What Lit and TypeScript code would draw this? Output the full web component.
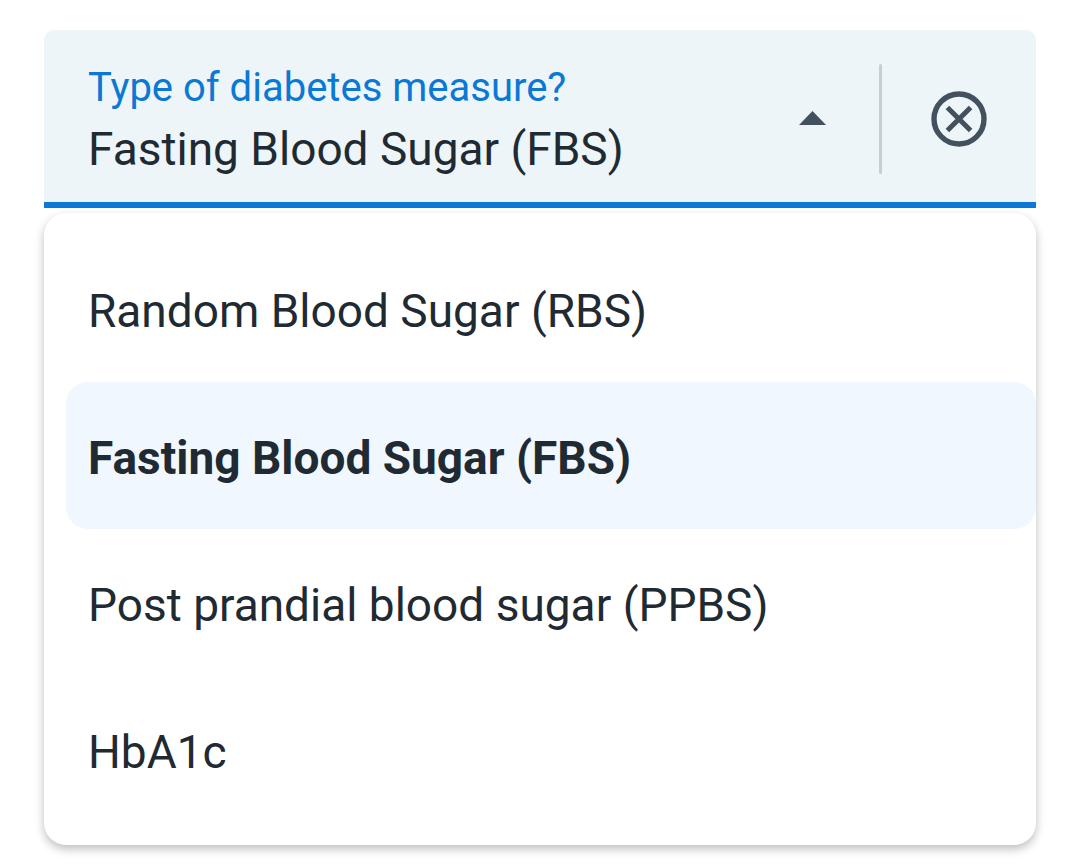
import { LitElement, html, css, nothing } from "lit";
import { customElement, state } from "lit/decorators.js";
import { classMap } from "lit/directives/class-map.js";

const MEASURES = [
  "Random Blood Sugar (RBS)",
  "Fasting Blood Sugar (FBS)",
  "Post prandial blood sugar (PPBS)",
  "HbA1c",
];

@customElement("app-root")
export class AppRoot extends LitElement {
  @state() private selected = "Fasting Blood Sugar (FBS)";
  @state() private open = true;

  static styles = css`
    :host {
      display: block;
      box-sizing: border-box;
      padding: 30px 44px 20px;
      background: #fff;
      color: #1f2a33;
      font-family: Roboto, "Noto Sans", sans-serif;
    }
    button,
    select {
      margin: 0;
      padding: 0;
      border: 0;
      background: none;
      color: inherit;
      font: inherit;
      cursor: pointer;
    }
    .field {
      display: flex;
      border-bottom: 6px solid #0b78d8;
      border-radius: 10px 10px 0 0;
      background: #edf5f9;
    }
    .text {
      display: flex;
      flex: 1;
      flex-direction: column;
      min-width: 0;
      padding: 29px 0 21px 44px;
    }
    .label {
      color: #0b78d3;
      font-size: 40px;
      line-height: 58px;
    }
    .value {
      appearance: none;
      width: 100%;
      height: 64px;
      font-size: 46px;
      line-height: 64px;
    }
    .value option {
      font-size: 16px;
    }
    .controls {
      display: flex;
      align-items: center;
      padding: 34px 49px 28px 0;
    }
    .controls svg {
      display: block;
    }
    .divider {
      align-self: stretch;
      width: 3px;
      margin: 0 49px 0 53px;
      border-radius: 2px;
      background: #c5ced4;
    }
    .clear {
      border-radius: 50%;
    }
    .menu {
      margin: 5px 0 0;
      padding: 22px 0 22px 22px;
      border-radius: 22px;
      background: #fff;
      box-shadow: 0 4px 10px rgba(0, 0, 0, 0.26);
    }
    .option {
      display: block;
      width: 100%;
      height: 147px;
      padding: 4px 22px 0;
      border-radius: 22px;
      font-size: 46px;
      line-height: 56px;
      text-align: left;
    }
    .option.selected {
      background: #f0f7fe;
      font-weight: 700;
    }
  `;

  private toggle(event: Event) {
    event.preventDefault();
    this.open = !this.open;
  }

  private choose(measure: string) {
    this.selected = measure;
    this.open = false;
  }

  render() {
    return html`
      <div class="field">
        <div class="text">
          <label class="label" for="measure">Type of diabetes measure?</label>
          <select
            id="measure"
            class="value"
            @mousedown=${this.toggle}
            @change=${(e: Event) => this.choose((e.target as HTMLSelectElement).value)}
          >
            <option value="" ?selected=${this.selected === ""}></option>
            ${MEASURES.map(
              (m) => html`<option value=${m} ?selected=${m === this.selected}>${m}</option>`
            )}
          </select>
        </div>
        <div class="controls">
          <button type="button" aria-label="Toggle options" aria-expanded=${this.open} @click=${this.toggle}>
            <svg width="27" height="16" viewBox="0 0 27 16" aria-hidden="true">
              <path d="M0 14 13.5 0 27 14z" fill="#43515e" />
            </svg>
          </button>
          <span class="divider"></span>
          <button class="clear" type="button" aria-label="Clear" @click=${() => (this.selected = "")}>
            <svg width="56" height="56" viewBox="0 0 56 56" fill="none" stroke="#43515e" aria-hidden="true">
              <circle cx="28" cy="28" r="25" stroke-width="5.4" />
              <path d="M16.4 16.4 39.6 39.6M39.6 16.4 16.4 39.6" stroke-width="5" />
            </svg>
          </button>
        </div>
      </div>
      ${this.open
        ? html`<div class="menu" role="listbox" aria-label="Type of diabetes measure?">
            ${MEASURES.map(
              (m) => html`<button
                type="button"
                role="option"
                aria-selected=${m === this.selected}
                class=${classMap({ option: true, selected: m === this.selected })}
                @click=${() => this.choose(m)}
              >${m}</button>`
            )}
          </div>`
        : nothing}
    `;
  }
}
